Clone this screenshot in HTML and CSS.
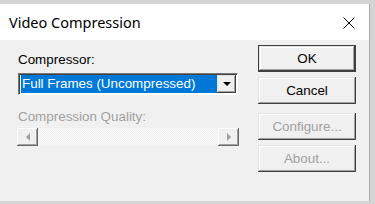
FILE: index.html
```html
<!DOCTYPE html>
<html lang="en">
<head>
  <meta charset="UTF-8">
  <title>Video Compression</title>
  <link rel="stylesheet" href="styles.css">
</head>
<body>
  <div class="window">
    <div class="titlebar">
      <span class="title">Video Compression</span>
      <svg class="close" width="12" height="12" viewBox="0 0 12 12">
        <path d="M0.5 0.5 L11.5 11.5 M11.5 0.5 L0.5 11.5" stroke="#000" stroke-width="1" fill="none"/>
      </svg>
    </div>
    <div class="content">
      <div class="left">
        <div class="label">Compressor:</div>
        <div class="combo">
          <div class="combo-value">Full Frames (Uncompressed)</div>
          <div class="combo-btn"><span class="arrow-down"></span></div>
        </div>
        <div class="label disabled quality">Compression Quality:</div>
        <div class="scrollbar">
          <div class="sb-btn"><span class="arrow-left"></span></div>
          <div class="sb-track"></div>
          <div class="sb-btn"><span class="arrow-right"></span></div>
        </div>
      </div>
      <div class="right">
        <div class="btn default">OK</div>
        <div class="btn">Cancel</div>
        <div class="btn disabled gap">Configure...</div>
        <div class="btn disabled">About...</div>
      </div>
    </div>
  </div>
</body>
</html>
```

FILE: styles.css
```css
body {
  margin: 0;
  background: #d4d4d4;
  font-family: "Liberation Sans", Arial, sans-serif;
  font-size: 13.4px;
  color: #000;
}
.window {
  margin-top: 4px;
  width: 369px;
  height: 197px;
  background: #f0f0f0;
  border-right: 1px solid #a8a8a8;
}
.titlebar {
  height: 36px;
  background: #fff;
  display: flex;
  align-items: center;
  justify-content: space-between;
  padding: 0 14px 0 9px;
}
.title {
  font-family: "Noto Sans", "Open Sans", sans-serif;
  font-size: 14.5px;
  color: #000;
}
.close {
  margin-top: 2px;
}
.content {
  display: flex;
}
.left {
  padding: 12px 0 0 18px;
  width: 222px;
}
.label {
  line-height: 16px;
  margin-bottom: 5px;
}
.label.disabled {
  color: #a0a0a0;
}
.quality {
  margin-top: 14px;
  margin-bottom: 3px;
}
.combo {
  width: 220px;
  height: 22px;
  box-sizing: border-box;
  border: 1px solid;
  border-color: #7a7a7a #ffffff #ffffff #7a7a7a;
  box-shadow: inset 1px 1px 0 #404040;
  background: #fff;
  display: flex;
  padding: 1px 1px 1px 2px;
}
.combo-value {
  flex: 1;
  background: #0078d7;
  color: #fff;
  line-height: 18px;
  padding-left: 1px;
  white-space: nowrap;
}
.combo-btn {
  width: 19px;
  background: #f0f0f0;
  box-shadow: inset -1px -1px 0 #404040, inset 1px 1px 0 #e3e3e3, inset -2px -2px 0 #a0a0a0;
  display: flex;
  align-items: center;
  justify-content: center;
}
.arrow-down {
  width: 0;
  height: 0;
  border-left: 4px solid transparent;
  border-right: 4px solid transparent;
  border-top: 4px solid #000;
}
.scrollbar {
  width: 222px;
  height: 18px;
  margin-left: -1px;
  display: flex;
}
.sb-track {
  flex: 1;
  background: repeating-conic-gradient(#fafafa 0 25%, #f0f0f0 0 50%) 0 0 / 2px 2px;
}
.sb-btn {
  width: 21px;
  background: #f0f0f0;
  box-shadow: inset -1px -1px 0 #696969, inset 1px 1px 0 #ffffff, inset -2px -2px 0 #a0a0a0;
  display: flex;
  align-items: center;
  justify-content: center;
}
.arrow-left, .arrow-right {
  width: 0;
  height: 0;
  border-top: 4px solid transparent;
  border-bottom: 4px solid transparent;
}
.arrow-left {
  border-right: 4px solid #a0a0a0;
}
.arrow-right {
  border-left: 4px solid #a0a0a0;
}
.right {
  padding: 5px 0 0 18px;
  display: flex;
  flex-direction: column;
  gap: 5px;
}
.btn {
  width: 98px;
  height: 27px;
  box-sizing: border-box;
  background: #f0f0f0;
  box-shadow: inset -1px -1px 0 #404040, inset 1px 1px 0 #e3e3e3, inset -2px -2px 0 #a0a0a0, inset 2px 2px 0 #ffffff;
  display: flex;
  align-items: center;
  justify-content: center;
}
.btn.default {
  border: 1px solid #404040;
}
.btn.disabled {
  color: #a0a0a0;
}
.btn.gap {
  margin-top: 4px;
}
```
